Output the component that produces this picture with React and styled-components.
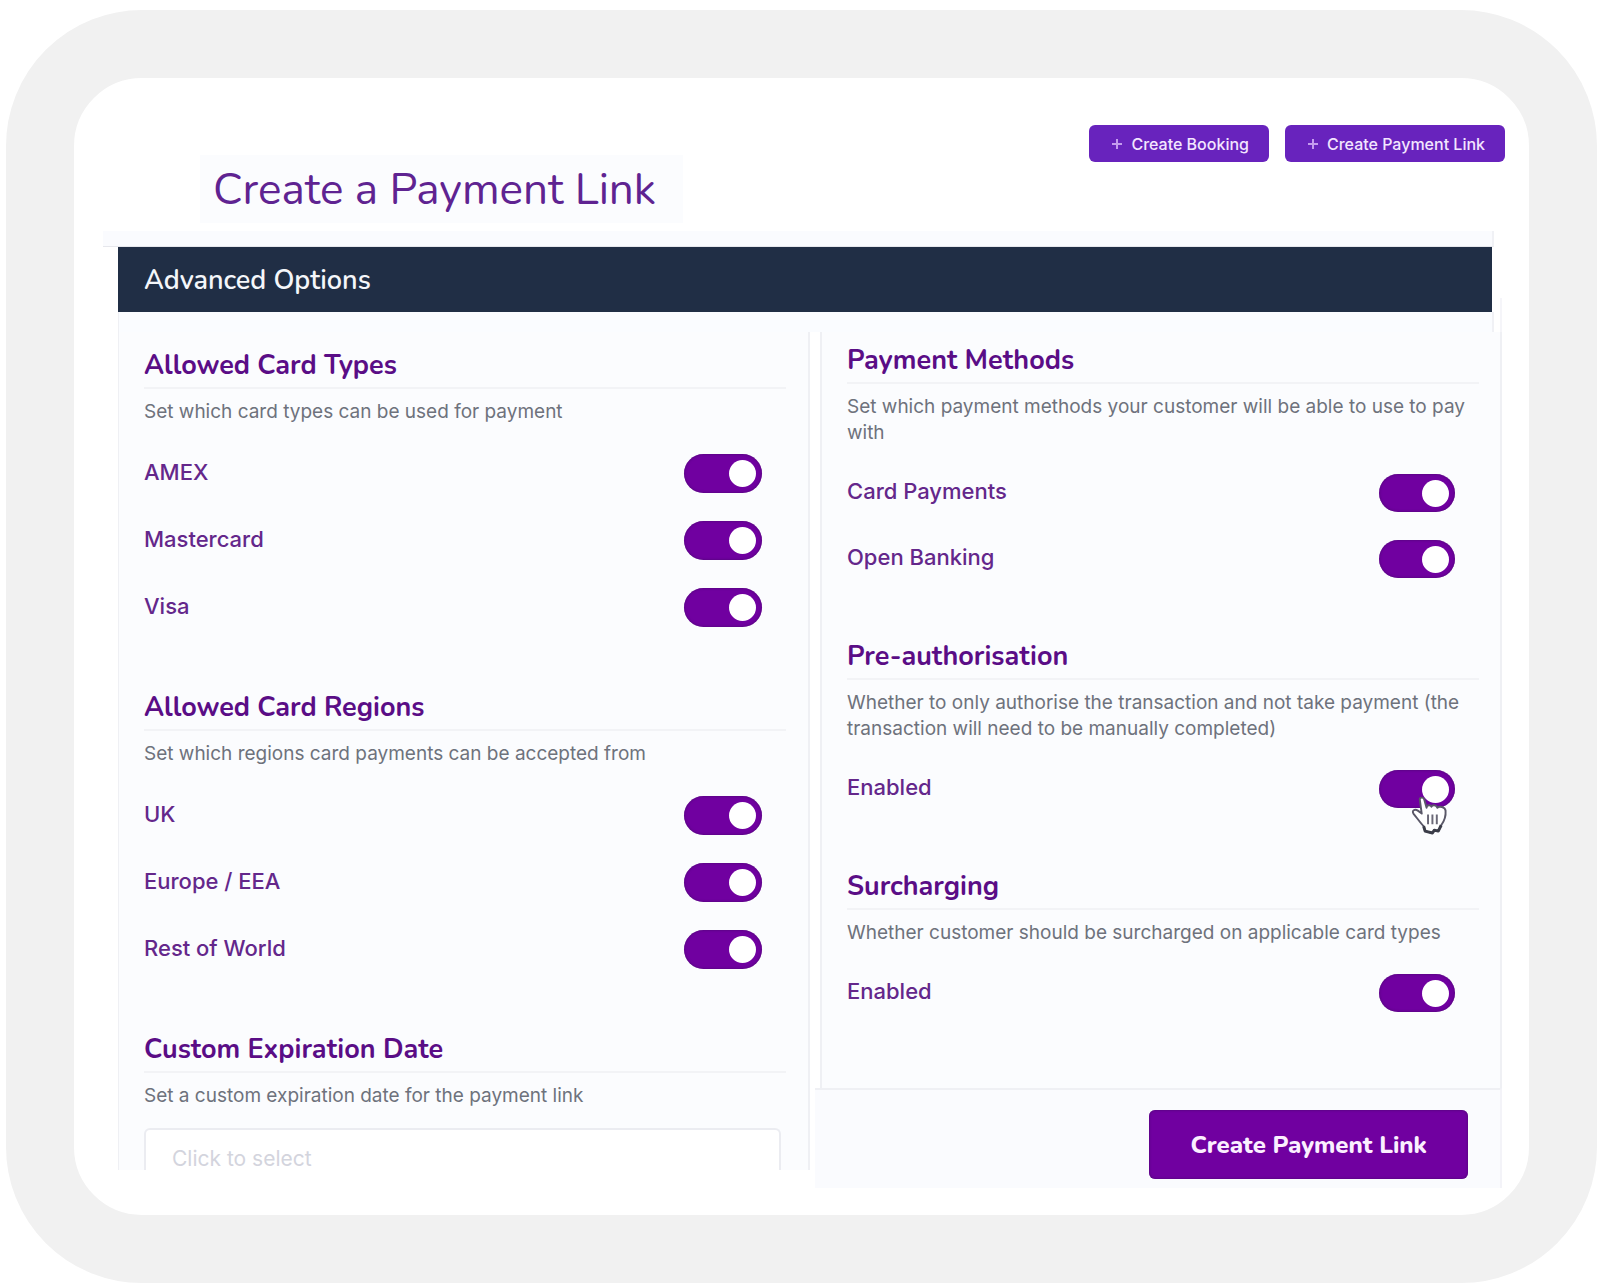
import { useState } from 'react';
import styled, { createGlobalStyle } from 'styled-components';

const GlobalStyle = createGlobalStyle`
  *, *::before, *::after {
    box-sizing: border-box;
  }

  body {
    margin: 0;
    background: #fff;
    font-family: Inter, "Liberation Sans", sans-serif;
  }
`;

const Page = styled.div`
  padding: 10px 3px 3px 6px;
`;

const Frame = styled.main`
  border: 68px solid #f1f1f1;
  border-radius: 136px;
  padding: 47px 27px 27px 29px;
  background: #fff;
`;

const Header = styled.header`
  display: flex;
  align-items: flex-start;
  justify-content: space-between;
  margin: 0 -3px 8px 97px;
`;

const Title = styled.h1`
  margin: 30px 0 0;
  padding: 2px 27px 0 13px;
  background: #fbfcfe;
  color: #5f2391;
  font-family: Nunito, Lato, sans-serif;
  font-size: 44px;
  font-weight: 400;
  line-height: 66px;
`;

const Actions = styled.div`
  display: flex;
  gap: 16px;
`;

const SmallButton = styled.button`
  display: flex;
  align-items: center;
  gap: 8px;
  height: 37px;
  padding: 0 20px 0 22px;
  border: 0;
  border-radius: 6px;
  background: #6823bd;
  color: #f3e6ff;
  font-family: inherit;
  font-size: 16px;
  font-weight: 500;
`;

const Strip = styled.div`
  height: 16px;
  margin-right: 8px;
  border-right: 2px solid #f0f1f5;
  border-bottom: 1px solid #e6e7ec;
  background: #fafbfe;
`;

const Panel = styled.section`
  margin-left: 15px;
`;

const Banner = styled.h2`
  margin: 0 10px 0 0;
  padding: 3px 26px 0;
  background: #202e45;
  color: #f4f6fa;
  font-family: Nunito, Lato, sans-serif;
  font-size: 27px;
  font-weight: 600;
  line-height: 62px;
`;

const Shelf = styled.div`
  position: relative;
  height: 20px;
  margin-right: 8px;
  border-left: 1px solid #eff0f4;
  border-right: 2px solid #f0f1f5;
  background: #fafcff;

  &::after {
    content: "";
    position: absolute;
    top: -14px;
    right: -10px;
    bottom: 0;
    width: 2px;
    background: #f5f5f9;
  }
`;

const Columns = styled.div`
  display: grid;
  grid-template-columns: minmax(0, 692fr) minmax(0, 687fr);
  align-items: start;
  gap: 5px;
`;

const LeftColumn = styled.div`
  padding: 12px 22px 0 25px;
  border: solid #eff0f4;
  border-width: 0 2px 0 1px;
  background: #fbfcfe;
`;

const RightColumn = styled.div``;

const RightBody = styled.div`
  margin-left: 5px;
  padding: 8px 21px 62px 25px;
  border: solid #eff0f4;
  border-width: 0 2px;
  background: #fbfcfe;
`;

const Section = styled.section`
  & + & {
    margin-top: 44px;
  }
`;

const SectionTitle = styled.h3`
  margin: 0;
  border-bottom: 2px solid #f2f3f6;
  color: #5a0d86;
  font-family: Nunito, Lato, sans-serif;
  font-size: 27px;
  font-weight: 700;
  line-height: ${({ $compact }) => ($compact ? 42 : 43)}px;
`;

const Description = styled.p`
  margin: 10px 0 0;
  color: #6e727c;
  font-size: 19px;
  line-height: 26px;
`;

const Rows = styled.div`
  padding: ${({ $compact }) => ($compact ? '14px 0 0' : '15px 0 1px')};
`;

const Row = styled.div`
  position: relative;
  display: flex;
  align-items: center;
  justify-content: space-between;
  height: ${({ $compact }) => ($compact ? 66 : 67)}px;
  padding-right: 24px;
`;

const RowLabel = styled.label`
  padding-bottom: 4px;
  color: #64278b;
  font-size: 22px;
  font-weight: 500;
  line-height: 28px;
`;

const Switch = styled.input`
  appearance: none;
  width: ${({ $compact }) => ($compact ? 76 : 78)}px;
  height: ${({ $compact }) => ($compact ? 38 : 39)}px;
  margin: 0;
  padding: 6px;
  border-radius: 20px;
  background: #c9c9d4;
  cursor: pointer;

  &::before {
    content: "";
    display: block;
    width: 27px;
    height: 27px;
    border-radius: 50%;
    background: #fff;
  }

  &:checked {
    background: #7000a0;
    box-shadow: inset 0 0 3px #4b0870;
  }

  &:checked::before {
    margin-left: auto;
  }
`;

const Pointer = styled.svg`
  position: absolute;
  top: 40px;
  right: 31px;
  pointer-events: none;
`;

const DateInput = styled.input`
  display: block;
  width: calc(100% - 5px);
  height: 42px;
  margin-top: 19px;
  padding: 16px 26px 0;
  border: 2px solid #ebecf1;
  border-bottom: 0;
  border-radius: 6px 6px 0 0;
  background: #fff;
  font-family: inherit;
  font-size: 21px;

  &::placeholder {
    color: #d3d4dd;
    opacity: 1;
  }
`;

const Footer = styled.footer`
  display: flex;
  justify-content: flex-end;
  padding: 20px 32px 9px;
  border-top: 2px solid #eff0f4;
  border-right: 2px solid #f3f3f8;
  background: #fafbfe;
`;

const SubmitButton = styled.button`
  height: 69px;
  padding: 0 41px;
  border: 0;
  border-radius: 6px;
  background: #7000a0;
  box-shadow: inset 0 0 3px #4b0870;
  color: #fbefff;
  font-family: Nunito, Lato, sans-serif;
  font-size: 24px;
  font-weight: 800;
`;

const PlusIcon = () => (
  <svg width="12" height="12" viewBox="0 0 12 12" fill="none" stroke="#c49bee" strokeWidth="2" aria-hidden="true">
    <path d="M6 1v10M1 6h10" />
  </svg>
);

const HandPointer = () => (
  <Pointer width="37" height="39" viewBox="0 0 38 40" aria-hidden="true">
    <path
      d="M9 3.500C9 1 13 1 13.600 3.500L16 12C16 9 20 8.500 21 11C22 8.500 26 9 27 12C29 10 35 11 35.500 15C36 21 34 26 31 30L28 36L24 35L22 38L14.500 36L13 31C10 28 6.500 23 2.500 18C0.500 15 4 13 7 15L11 18Z"
      fill="#fff"
      stroke="#5a5868"
      strokeWidth="2"
      strokeLinejoin="round"
    />
    <path d="M13 31L14.500 36L22 38L24 35L28 36L31 30" fill="none" stroke="#3a3c48" strokeWidth="3" strokeLinejoin="round" />
    <path d="M17.500 19v10M22 19v10M26.500 19v10" fill="none" stroke="#6b6977" strokeWidth="2" />
  </Pointer>
);

const ToggleRow = ({ id, label, compact, pointer }) => {
  const [on, setOn] = useState(true);

  return (
    <Row $compact={compact}>
      <RowLabel htmlFor={id}>{label}</RowLabel>
      <Switch id={id} type="checkbox" role="switch" $compact={compact} checked={on} onChange={() => setOn(!on)} />
      {pointer && <HandPointer />}
    </Row>
  );
}

const ToggleSection = ({ title, description, options, compact, pointer }) => (
  <Section>
    <SectionTitle $compact={compact}>{title}</SectionTitle>
    <Description>{description}</Description>
    <Rows $compact={compact}>
      {options.map(([id, label]) => (
        <ToggleRow key={id} id={id} label={label} compact={compact} pointer={pointer} />
      ))}
    </Rows>
  </Section>
);

const App = () => {
  return (
    <Page>
      <GlobalStyle />
      <Frame>
        <Header>
          <Title>Create a Payment Link</Title>
          <Actions>
            <SmallButton type="button"><PlusIcon />Create Booking</SmallButton>
            <SmallButton type="button"><PlusIcon />Create Payment Link</SmallButton>
          </Actions>
        </Header>
        <Strip />
        <Panel>
          <Banner>Advanced Options</Banner>
          <Shelf />
          <Columns>
            <LeftColumn>
              <ToggleSection
                title="Allowed Card Types"
                description="Set which card types can be used for payment"
                options={[['amex', 'AMEX'], ['mastercard', 'Mastercard'], ['visa', 'Visa']]}
              />
              <ToggleSection
                title="Allowed Card Regions"
                description="Set which regions card payments can be accepted from"
                options={[['uk', 'UK'], ['europe', 'Europe / EEA'], ['world', 'Rest of World']]}
              />
              <Section>
                <SectionTitle id="expiration">Custom Expiration Date</SectionTitle>
                <Description>Set a custom expiration date for the payment link</Description>
                <DateInput type="text" placeholder="Click to select" aria-labelledby="expiration" />
              </Section>
            </LeftColumn>
            <RightColumn>
              <RightBody>
                <ToggleSection
                  compact
                  title="Payment Methods"
                  description="Set which payment methods your customer will be able to use to pay with"
                  options={[['card', 'Card Payments'], ['banking', 'Open Banking']]}
                />
                <ToggleSection
                  compact
                  pointer
                  title="Pre-authorisation"
                  description="Whether to only authorise the transaction and not take payment (the transaction will need to be manually completed)"
                  options={[['preauth', 'Enabled']]}
                />
                <ToggleSection
                  compact
                  title="Surcharging"
                  description="Whether customer should be surcharged on applicable card types"
                  options={[['surcharge', 'Enabled']]}
                />
              </RightBody>
              <Footer>
                <SubmitButton type="button">Create Payment Link</SubmitButton>
              </Footer>
            </RightColumn>
          </Columns>
        </Panel>
      </Frame>
    </Page>
  );
}

export default App;
